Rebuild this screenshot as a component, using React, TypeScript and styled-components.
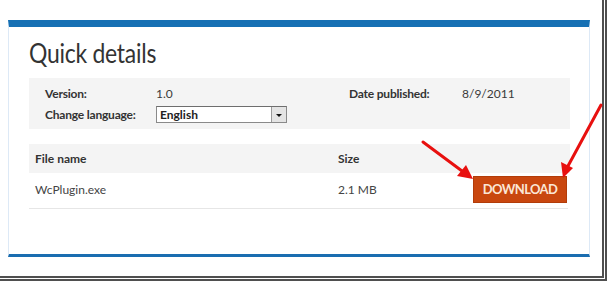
import React from "react";
import styled, { createGlobalStyle } from "styled-components";

const GlobalStyle = createGlobalStyle`
  html, body { margin: 0; padding: 0; background: #ffffff; }
  body { font-family: Lato, "Open Sans", Arial, sans-serif; }
  * { box-sizing: border-box; }
`;

const Frame = styled.div`
  position: relative;
  width: 607px;
  height: 281px;
  padding: 20px 12px 0 8px;
  border-right: 5px double #4f4f4f;
  border-bottom: 5px double #4f4f4f;
  background: #fff;
`;

const Panel = styled.section`
  height: 237px;
  border-top: 7px solid #1670b4;
  border-bottom: 3px solid #1a6db0;
  border-left: 1px solid #dde9f6;
  border-right: 1px solid #dde9f6;
  padding: 0 19px 0 20px;
`;

const Title = styled.h1`
  margin: 11px 0 10px;
  font-family: Lato, "Open Sans", Arial, sans-serif;
  font-size: 27px;
  line-height: 30px;
  font-weight: 400;
  color: #333;
  letter-spacing: -0.3px;
  transform: scaleX(0.85);
  transform-origin: left center;
`;

const InfoBox = styled.div`
  background: #f4f4f4;
  height: 51px;
  padding: 7px 0 0 16px;
  display: grid;
  grid-template-columns: 111px 193px 113px 1fr;
  grid-template-rows: 16px 17px;
  row-gap: 5px;
  align-items: center;
`;

const Label = styled.span`
  font-size: 12px;
  font-weight: 700;
  color: #333;
  letter-spacing: -0.2px;
  white-space: nowrap;
`;

const Value = styled.span`
  font-size: 12px;
  color: #3a3a3a;
`;

const Select = styled.div`
  width: 131px;
  height: 17px;
  border: 1px solid #8a8a8a;
  border-top-color: #6e6e6e;
  background: #fff;
  display: flex;
  align-items: center;
  justify-content: space-between;
  padding-left: 3px;
  font-size: 12px;
  font-weight: 700;
  color: #222;
`;

const SelectButton = styled.span`
  width: 15px;
  height: 15px;
  background: #e4e4e4;
  border-left: 1px solid #9a9a9a;
  display: flex;
  align-items: center;
  justify-content: center;
  &::after {
    content: "";
    border-left: 3px solid transparent;
    border-right: 3px solid transparent;
    border-top: 3px solid #111;
    margin-top: 2px;
  }
`;

const Table = styled.div`
  margin-top: 15px;
`;

const Row = styled.div<{ $head?: boolean }>`
  display: grid;
  grid-template-columns: 303px 1fr auto;
  align-items: center;
  height: ${(p) => (p.$head ? "29px" : "36px")};
  padding: 0 3px 0 6px;
  background: ${(p) => (p.$head ? "#f4f4f4" : "transparent")};
  border-bottom: ${(p) => (p.$head ? "none" : "1px solid #e6e6e6")};
  margin-right: ${(p) => (p.$head ? "0" : "2px")};
`;

const Cell = styled.span<{ $bold?: boolean }>`
  font-size: 12px;
  font-weight: ${(p) => (p.$bold ? 700 : 400)};
  color: ${(p) => (p.$bold ? "#333" : "#444")};
  margin-top: ${(p) => (p.$bold ? "0" : "-3px")};
`;

const DownloadButton = styled.button`
  width: 94px;
  height: 27px;
  margin-top: -3px;
  margin-right: -2px;
  background: #c9470f;
  border: 1px solid #b23c09;
  color: #fbe6d6;
  font-family: Lato, "Open Sans", Arial, sans-serif;
  font-size: 13px;
  font-weight: 700;
  letter-spacing: -0.6px;
  padding: 0;
  cursor: pointer;
`;

const Arrows = styled.svg`
  position: absolute;
  left: 0;
  top: 0;
  width: 610px;
  height: 285px;
  pointer-events: none;
`;

export default function App() {
  return (
    <>
      <GlobalStyle />
      <Frame>
        <Panel>
          <Title>Quick details</Title>
          <InfoBox>
            <Label>Version:</Label>
            <Value>1.0</Value>
            <Label>Date published:</Label>
            <Value>8/9/2011</Value>
            <Label>Change language:</Label>
            <Select>
              English
              <SelectButton />
            </Select>
          </InfoBox>
          <Table>
            <Row $head>
              <Cell $bold>File name</Cell>
              <Cell $bold>Size</Cell>
              <span />
            </Row>
            <Row>
              <Cell>WcPlugin.exe</Cell>
              <Cell>2.1 MB</Cell>
              <DownloadButton>DOWNLOAD</DownloadButton>
            </Row>
          </Table>
        </Panel>
        <Arrows viewBox="0 0 610 285">
          <g stroke="#e8100f" strokeWidth="3" strokeLinecap="round" fill="none">
            <line x1="423" y1="142" x2="462" y2="171" />
            <line x1="601" y1="105" x2="568" y2="166" />
          </g>
          <g fill="#e8100f">
            <polygon points="473,179 457,176 466,165" />
            <polygon points="563,178 561,162 573,168" />
          </g>
        </Arrows>
      </Frame>
    </>
  );
}
